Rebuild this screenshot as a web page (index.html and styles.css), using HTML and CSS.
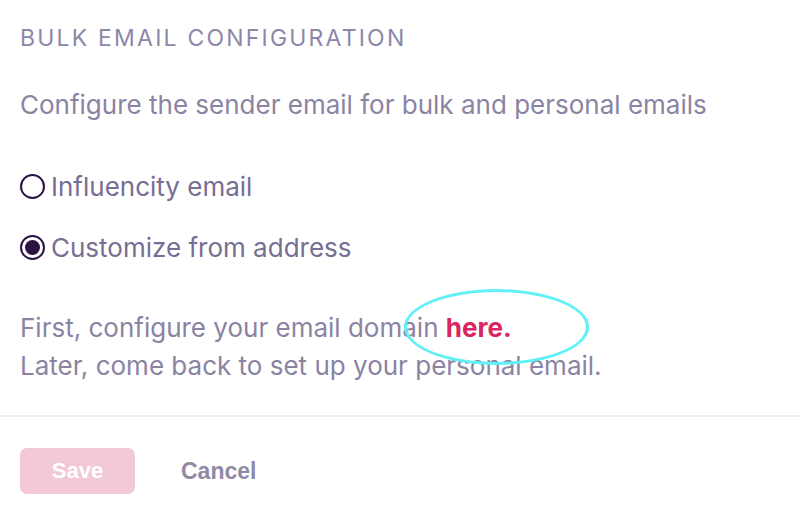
FILE: index.html
```html
<!DOCTYPE html>
<html>
<head>
<meta charset="utf-8">
<link rel="stylesheet" href="styles.css">
</head>
<body>
<div class="panel">
  <section class="content">
    <h2 class="title">BULK EMAIL CONFIGURATION</h2>
    <p class="desc">Configure the sender email for bulk and personal emails</p>
    <div class="options">
      <label class="option"><span class="radio"></span><span class="label">Influencity email</span></label>
      <label class="option"><span class="radio checked"></span><span class="label">Customize from address</span></label>
    </div>
    <p class="note">First, configure your email domain <span class="link-wrap"><a class="link">here.</a><span class="circle"></span></span><br>Later, come back to set up your personal email.</p>
  </section>
  <footer class="footer">
    <button class="btn save">Save</button>
    <button class="btn cancel">Cancel</button>
  </footer>
</div>
</body>
</html>
```
FILE: styles.css
```css
html, body { margin: 0; padding: 0; background: #fff; }
body { font-family: "Inter", "Open Sans", sans-serif; color: #8a84a2; }
.panel { width: 800px; height: 510px; overflow: hidden; }
.content { padding: 23px 20px 0; }
.title { margin: 0; font-size: 23px; font-weight: 400; letter-spacing: 2.2px; line-height: 30px; color: #8d87a7; }
.desc { margin: 37px 0 0; font-size: 26px; line-height: 30px; color: #8a84a2; }
.options { display: flex; flex-direction: column; gap: 31px; margin-top: 51px; }
.option { display: flex; align-items: center; height: 30px; gap: 6px; }
.radio { width: 25px; height: 25px; box-sizing: border-box; border: 2px solid #2b1242; border-radius: 50%; display: flex; align-items: center; justify-content: center; }
.radio.checked::after { content: ""; width: 15px; height: 15px; border-radius: 50%; background: #2b1242; }
.label { font-size: 26px; color: #776e93; }
.note { margin: 47px 0 0; font-size: 26px; line-height: 38px; color: #8a84a2; }
.link-wrap { position: relative; }
.link { color: #d92660; font-weight: 700; }
.circle { position: absolute; left: -42px; top: -23px; width: 185px; height: 76px; border: 3.5px solid #5ef1f6; border-radius: 50%; box-sizing: border-box; }
.footer { border-top: 2px solid #efedf3; margin-top: 30px; padding: 31px 20px 0; display: flex; align-items: center; gap: 46px; }
.btn { font-family: "Liberation Sans", Arial, sans-serif; font-weight: 700; font-size: 23px; border: none; background: none; padding: 0; cursor: pointer; }
.save { width: 115px; height: 46px; border-radius: 7px; background: #f3c8d8; color: #fff; font-size: 22px; }
.cancel { color: #8f89a6; }
```
